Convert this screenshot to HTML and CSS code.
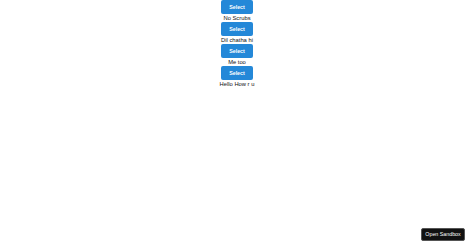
FILE: index.html
```html
<!DOCTYPE html>
<html>
<head>
<meta charset="utf-8">
<link rel="stylesheet" href="styles.css">
</head>
<body>
<div class="list">
  <div class="item"><button class="select">Select</button><div class="label">No Scrubs</div></div>
  <div class="item"><button class="select">Select</button><div class="label">Dil chatha hi</div></div>
  <div class="item"><button class="select">Select</button><div class="label">Me too</div></div>
  <div class="item"><button class="select">Select</button><div class="label">Hello How r u</div></div>
</div>
<a class="sandbox">Open Sandbox</a>
</body>
</html>
```
FILE: styles.css
```css
html, body {
  margin: 0;
  padding: 0;
  background: #ffffff;
  font-family: "Liberation Sans", Arial, sans-serif;
}
body {
  width: 474px;
  height: 248px;
  position: relative;
  overflow: hidden;
}
.list {
  display: flex;
  flex-direction: column;
  align-items: center;
}
.item {
  display: flex;
  flex-direction: column;
  align-items: center;
}
.select {
  width: 32px;
  height: 14px;
  background: #2488d8;
  color: #ffffff;
  border: none;
  border-radius: 2px;
  font-family: "Liberation Sans", Arial, sans-serif;
  font-weight: bold;
  font-size: 5.3px;
  padding: 0;
  margin: 0;
}
.label {
  font-size: 5.8px;
  line-height: 8px;
  color: #111;
}
.sandbox {
  position: absolute;
  right: 9px;
  bottom: 7px;
  width: 44px;
  height: 13px;
  background: #111111;
  color: #ffffff;
  font-size: 5.3px;
  line-height: 11px;
  text-align: center;
  border-radius: 2px;
  border: 1px solid #555;
  box-sizing: border-box;
}
```
